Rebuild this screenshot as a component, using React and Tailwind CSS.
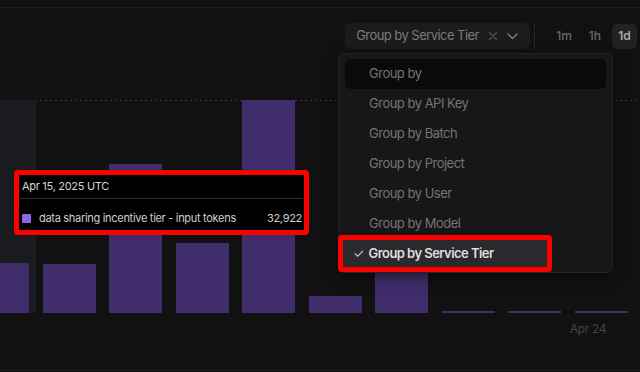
const bars = [50, 49, 149, 70, 213, 17, 53, 2, 2, 2];

const groupOptions = [
  'Group by',
  'Group by API Key',
  'Group by Batch',
  'Group by Project',
  'Group by User',
  'Group by Model',
];

function XIcon() {
  return (
    <svg width="10" height="10" viewBox="0 0 10 10" fill="none" stroke="#555555" strokeWidth="1.3" strokeLinecap="round">
      <path d="M1.5 1.5l7 7M8.5 1.5l-7 7" />
    </svg>
  );
}

function ChevronIcon() {
  return (
    <svg width="11" height="7" viewBox="0 0 11 7" fill="none" stroke="#808080" strokeWidth="1.4" strokeLinecap="round" strokeLinejoin="round">
      <path d="M1 1l4.5 4.5L10 1" />
    </svg>
  );
}

export default function App() {
  return (
    <div className="relative w-[640px] h-[372px] overflow-hidden bg-[#111111] font-['Inter','Liberation_Sans',sans-serif]">
      <div className="h-[7px]" />
      <div className="border-t border-[#1d1d1d]" />

      {/* header controls */}
      <div className="flex justify-end items-center h-[26px] mt-[15px] pr-[3px]">
        <div className="flex items-center w-[185px] h-[26px] rounded-[6px] bg-[#1b1b1b] pl-[11px]">
          <span className="text-[13px] text-[#7a7a7a] tracking-[-0.55px] whitespace-nowrap">Group by Service Tier</span>
          <span className="ml-[9px] flex items-center"><XIcon /></span>
          <span className="ml-[9px] flex items-center"><ChevronIcon /></span>
        </div>
        <div className="w-px h-[26px] bg-[#262626] ml-[4px] mr-[21px]" />
        <span className="text-[12px] text-[#6a6a6a] font-medium">1m</span>
        <span className="text-[12px] text-[#6a6a6a] font-medium ml-[17px]">1h</span>
        <div className="ml-[11px] w-[25px] h-[25px] rounded-[5px] bg-[#222222] flex items-center justify-center">
          <span className="text-[12px] text-[#aaaaaa] font-semibold">1d</span>
        </div>
      </div>

      {/* chart */}
      <div className="mt-[51px] h-[213px] bg-[repeating-linear-gradient(90deg,#3a3164_0_2px,transparent_2px_5px)] bg-no-repeat bg-[length:100%_1px]">
        <div className="flex h-full ml-[-30.5px]">
          {bars.map((h, i) => (
            <div key={i} className={`w-[66.5px] shrink-0 h-full flex items-end justify-center ${i === 0 ? 'bg-[#1a1b1f]' : ''}`}>
              <div className="w-[53px] bg-[#3e2d6a]" style={{ height: h }} />
            </div>
          ))}
        </div>
      </div>

      <div className="flex justify-end pr-[34px] mt-[8px] h-[16px] items-center">
        <span className="text-[12px] text-[#454545] tracking-[-0.4px]">Apr 24</span>
      </div>
      <div className="mt-[33px] border-t border-[#1d1d1d]" />

      {/* tooltip */}
      <div className="absolute left-[14px] top-[170px] w-[295px] h-[65px] rounded-[4px] border-[5px] border-[#ff0000] bg-black">
        <div className="h-[23px] flex items-center pl-[3px]">
          <span className="text-[11px] tracking-[-0.3px] text-[#d6d6d6]">Apr 15, 2025 UTC</span>
        </div>
        <div className="mx-[1px] border-t border-[#2e2e2e]" />
        <div className="flex items-center h-[31px] pl-[3px] pr-[2px] pt-[9px] pb-[2px]">
          <div className="w-[9px] h-[9px] rounded-[1px] bg-[#8b66e8]" />
          <span className="ml-[8px] text-[11px] tracking-[-0.3px] text-[#cfcfcf]">data sharing incentive tier - input tokens</span>
          <span className="ml-auto text-[11px] tracking-[-0.3px] text-[#cfcfcf]">32,922</span>
        </div>
      </div>

      {/* dropdown */}
      <div className="absolute left-[338px] top-[53px] w-[275px] h-[220px] rounded-[6px] border border-[#232323] bg-[#171717] pt-[5px] shadow-[0_4px_12px_rgba(0,0,0,0.5)]">
        {groupOptions.map((opt, i) => (
          <div
            key={opt}
            className={`mx-[6px] h-[30px] rounded-[5px] flex items-center pl-[24px] text-[13px] tracking-[-0.5px] text-[#747474] ${i === 0 ? 'bg-[#0a0a0a]' : ''}`}
          >
            {opt}
          </div>
        ))}
        <div className="relative mx-[6px] h-[30px]">
          <div className="absolute left-[-7px] top-[-4px] w-[214px] h-[37px] rounded-[4px] border-[5px] border-[#ff0000] bg-[#2a2a2e] flex items-center pl-[10px]">
            <span className="text-[13px] text-[#c8c8c8]">✓</span>
            <span className="ml-[4px] text-[13px] tracking-[-0.55px] font-semibold text-[#dedede]">Group by Service Tier</span>
          </div>
        </div>
      </div>
    </div>
  );
}
